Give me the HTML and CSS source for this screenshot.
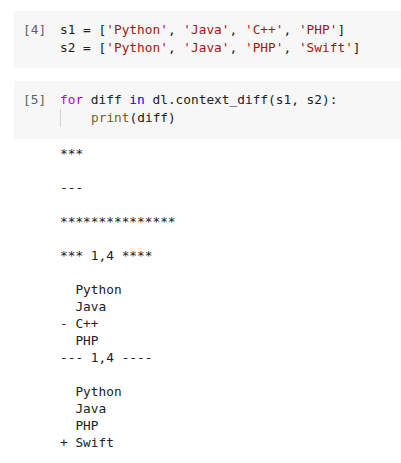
FILE: index.html
```html
<!DOCTYPE html>
<html>
<head>
<meta charset="utf-8">
<link rel="stylesheet" href="styles.css">
</head>
<body>
<div class="nb">
  <div class="cell cell-a">
    <div class="prompt">[4]</div>
    <pre class="code">s1 = [<span class="str">'Python'</span>, <span class="str">'Java'</span>, <span class="str">'C++'</span>, <span class="str">'PHP'</span>]
s2 = [<span class="str">'Python'</span>, <span class="str">'Java'</span>, <span class="str">'PHP'</span>, <span class="str">'Swift'</span>]</pre>
  </div>
  <div class="cell cell-b">
    <div class="prompt">[5]</div>
    <pre class="code"><span class="kw">for</span> diff <span class="kw2">in</span> dl.context_diff(s1, s2):
<span class="indent"><span class="guide"></span><span class="fn">print</span>(diff)</span></pre>
  </div>
  <pre class="output">***

---

***************

*** 1,4 ****

  Python
  Java
- C++
  PHP
--- 1,4 ----

  Python
  Java
  PHP
+ Swift</pre>
</div>
</body>
</html>
```

FILE: styles.css
```css
html, body {
  margin: 0;
  padding: 0;
  background: #ffffff;
}
.nb {
  display: flex;
  flex-direction: column;
  padding-top: 11px;
  padding-left: 14px;
}
.cell {
  display: flex;
  background: #f7f7f7;
  font-family: "DejaVu Sans Mono", "Liberation Mono", monospace;
  font-size: 12.8px;
  line-height: 18px;
  color: #212121;
}
.cell-a {
  height: 57px;
  box-sizing: border-box;
  padding-top: 10px;
}
.cell-b {
  margin-top: 13px;
  height: 58px;
  box-sizing: border-box;
  padding-top: 10px;
}
.prompt {
  width: 46px;
  padding-left: 9px;
  box-sizing: border-box;
  color: #616161;
  flex: none;
}
.code {
  margin: 0;
  font: inherit;
  white-space: pre;
}
.str { color: #a31515; }
.kw { color: #af00db; }
.kw2 { color: #0000ff; }
.fn { color: #795e26; }
.indent {
  display: inline-flex;
  align-items: stretch;
}
.guide {
  display: inline-block;
  width: 1px;
  background: #d3d3d3;
  margin-right: 30px;
}
.output {
  margin: 6px 0 0 46px;
  font-family: "DejaVu Sans Mono", "Liberation Mono", monospace;
  font-size: 12.8px;
  line-height: 17px;
  color: #212121;
}
```
